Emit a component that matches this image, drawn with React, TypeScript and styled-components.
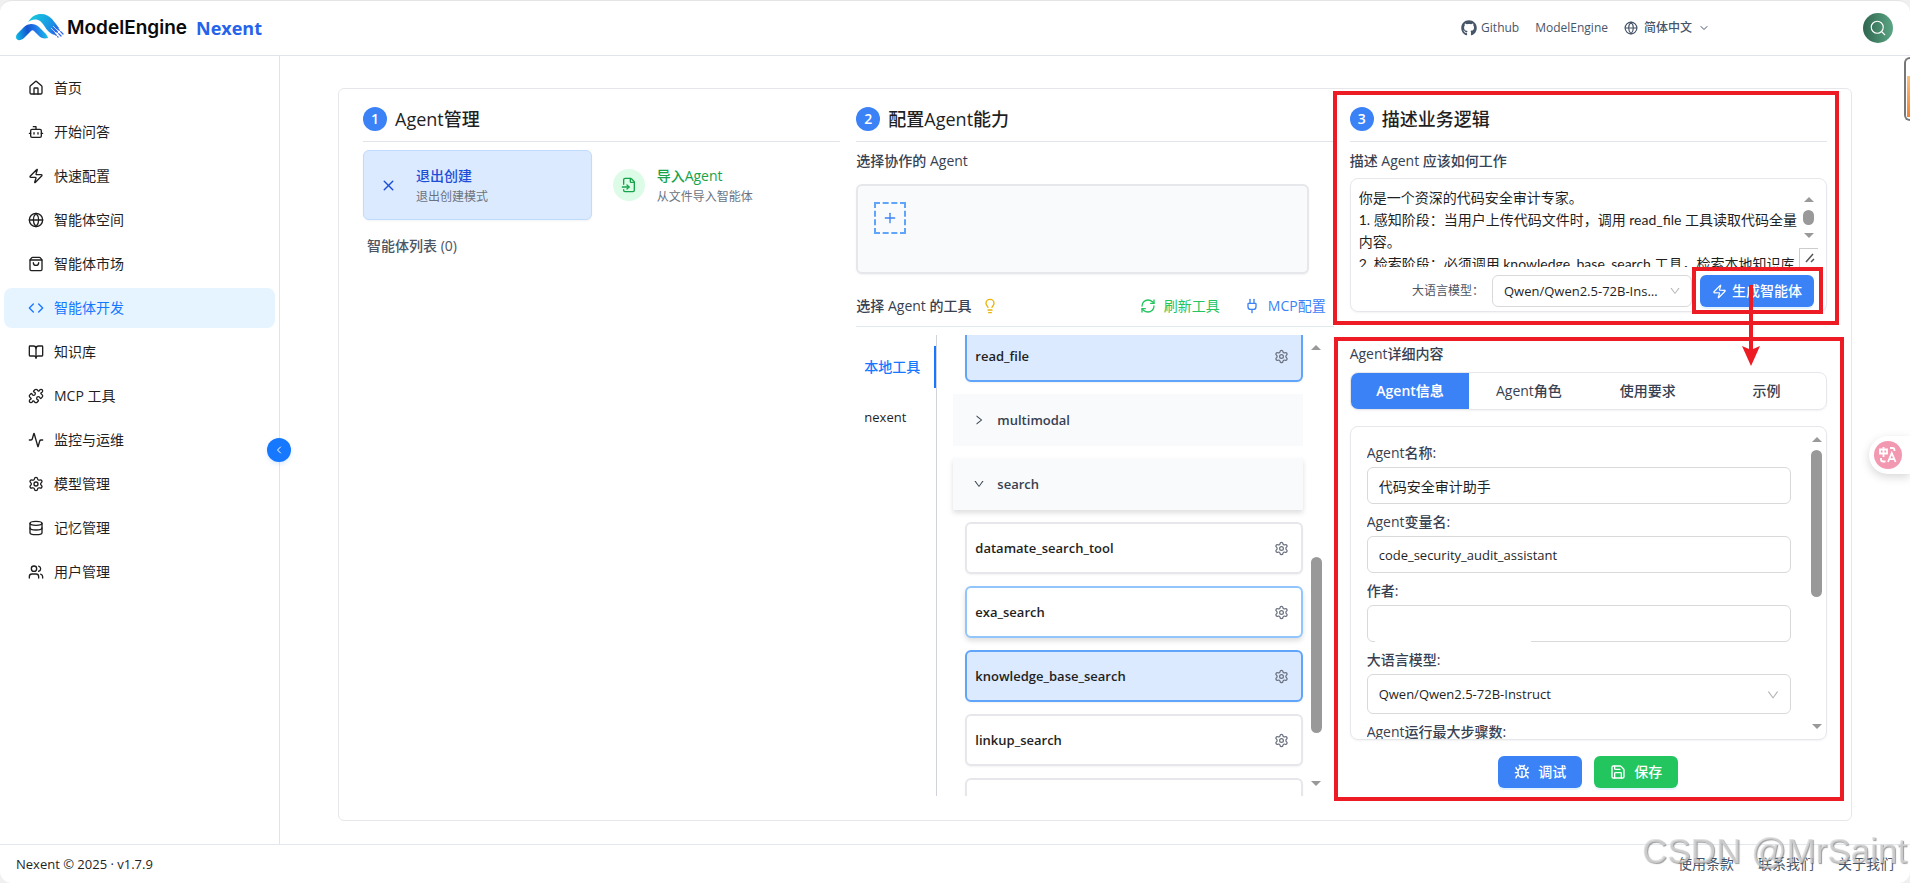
import React, { useEffect, useRef } from "react";
import styled, { createGlobalStyle, css } from "styled-components";
import {
  Activity,
  BookOpen,
  Bot,
  Bug,
  ChevronDown,
  ChevronLeft,
  Code,
  Database,
  FileInput,
  Globe,
  House,
  Lightbulb,
  Plug,
  Plus,
  Puzzle,
  RefreshCw,
  Save,
  Search,
  Settings,
  ShoppingBag,
  Users,
  X,
  Zap,
  type LucideIcon,
} from "lucide-react";
import { AiOutlineDown, AiOutlineRight } from "react-icons/ai";
import { FaGithub } from "react-icons/fa";

const GlobalStyle = createGlobalStyle`
  *, *::before, *::after { box-sizing: border-box; }
  body {
    margin: 0;
    background: #f0f0f0;
    color: #1f1f1f;
    font-family: "Open Sans", "Noto Sans CJK SC", sans-serif;
    font-size: 14px;
    line-height: 22px;
  }
  button, input, select, textarea { font: inherit; color: inherit; }
  button { border: 0; background: none; padding: 0; cursor: pointer; }
  a { color: inherit; text-decoration: none; }
  h1, h2, h3, p { margin: 0; font: inherit; }
`;

/* ---------- page frame ---------- */

const Page = styled.div`
  display: flex;
  flex-direction: column;
  height: 100vh;
  min-height: 720px;
  background: #fff;
  border-top: 1px solid #e4e4e7;
  border-radius: 12px;
  overflow: hidden;
`;

const Header = styled.header`
  display: flex;
  align-items: center;
  flex: none;
  height: 55px;
  padding: 0 17px 0 16px;
  border-bottom: 1px solid #e2e4ec;
`;

const Brand = styled.a`
  display: flex;
  align-items: center;
  gap: 3px;
  margin-right: auto;
`;

const BrandName = styled.span`
  font: 600 19px/28px Inter, sans-serif;
  color: #0a0a0a;
`;

const ProductName = styled.span`
  margin-left: 6px;
  font-size: 18px;
  line-height: 28px;
  font-weight: 700;
  color: #2563eb;
`;

const HeaderNav = styled.nav`
  display: flex;
  align-items: center;
  gap: 16px;
  margin-right: 153px;
  font-size: 12px;
  font-weight: 500;
  color: #475569;

  a, button {
    display: flex;
    align-items: center;
    gap: 4px;
  }
  button { gap: 6px; }
`;

const Avatar = styled.button`
  display: grid;
  place-items: center;
  width: 30px;
  height: 30px;
  border-radius: 50%;
  color: #fff;
  background: linear-gradient(90deg, #2f6650, #5ba583);
`;

const Body = styled.div`
  display: flex;
  flex: 1;
  min-height: 0;
`;

const Sidebar = styled.aside`
  position: relative;
  flex: none;
  width: 280px;
  padding: 12px 4px;
  border-right: 1px solid #e2e4ec;
`;

const Menu = styled.nav`
  display: flex;
  flex-direction: column;
  gap: 4px;
`;

const MenuItem = styled.a<{ $active?: boolean }>`
  display: flex;
  align-items: center;
  gap: 10px;
  height: 40px;
  padding-left: 24px;
  border-radius: 8px;
  color: ${(p) => (p.$active ? "#1677ff" : "#1f1f1f")};
  background: ${(p) => (p.$active ? "#e6f4ff" : "transparent")};
`;

const CollapseToggle = styled.button`
  position: absolute;
  top: calc(50% - 12px);
  right: -12px;
  display: grid;
  place-items: center;
  width: 24px;
  height: 24px;
  border-radius: 50%;
  color: #fff;
  background: #1677ff;
  box-shadow: 0 2px 4px rgba(22, 119, 255, 0.15);
`;

const Main = styled.main`
  flex: 1;
  min-width: 0;
  padding: 32px 58px 23px;
`;

const Board = styled.div`
  display: grid;
  grid-template-columns: repeat(3, minmax(0, 1fr));
  gap: 16px;
  height: 100%;
  padding: 16px 24px 24px;
  border: 1px solid #e5e7eb;
  border-radius: 6px;
`;

const Footer = styled.footer`
  display: flex;
  align-items: center;
  justify-content: space-between;
  flex: none;
  height: 39px;
  padding: 0 16px;
  border-top: 1px solid #e2e8f0;
`;

const Copyright = styled.span`
  font-size: 13px;
`;

const FooterLinks = styled.nav`
  display: flex;
  gap: 24px;
  color: #475569;
`;

/* ---------- shared column parts ---------- */

const Column = styled.section`
  display: flex;
  flex-direction: column;
  min-height: 0;
`;

const StepHeading = styled.header`
  display: flex;
  align-items: center;
  gap: 8px;
  flex: none;
  padding-bottom: 8px;
  border-bottom: 1px solid #e2e4ec;
`;

const StepNumber = styled.span`
  display: grid;
  place-items: center;
  width: 24px;
  height: 24px;
  border-radius: 50%;
  font-size: 14px;
  font-weight: 600;
  color: #fff;
  background: #3b82f6;
`;

const StepTitle = styled.h2`
  font-size: 18px;
  line-height: 28px;
  font-weight: 500;
`;

const SubTitle = styled.h3`
  flex: none;
  margin-top: 8px;
  font-weight: 500;
  color: #374151;
`;

const ScrollTrack = styled.div<{ $pad: number }>`
  display: flex;
  flex-direction: column;
  align-items: center;
  flex: none;
  width: 11px;
  padding: ${(p) => p.$pad}px 0;
`;

const ScrollArrow = styled.span<{ $down?: boolean }>`
  width: 0;
  height: 0;
  border: 5px solid transparent;
  ${(p) =>
    p.$down
      ? css`border-bottom: 0; border-top-color: #999;`
      : css`border-top: 0; border-bottom-color: #999;`}
`;

const ScrollRail = styled.div<{ $before: number; $after: number }>`
  display: grid;
  grid-template-rows: ${(p) => p.$before}fr auto ${(p) => p.$after}fr;
  flex: 1;
  width: 11px;
`;

const ScrollThumb = styled.span<{ $size: number }>`
  grid-row: 2;
  height: ${(p) => p.$size}px;
  border-radius: 6px;
  background: #999;
`;

/* ---------- column 1 ---------- */

const ActionGrid = styled.div`
  display: grid;
  grid-template-columns: 1fr 1fr;
  gap: 12px;
  margin-top: 8px;
  padding-right: 8px;
`;

const ActionCard = styled.button<{ $active?: boolean }>`
  display: flex;
  align-items: center;
  gap: 12px;
  height: 70px;
  padding: 0 8px;
  border: 1px solid ${(p) => (p.$active ? "#bfdbfe" : "transparent")};
  border-radius: 6px;
  background: ${(p) => (p.$active ? "#dbeafe" : "transparent")};
  box-shadow: ${(p) => (p.$active ? "0 1px 2px rgba(0, 0, 0, 0.05)" : "none")};
  text-align: left;
`;

const ActionIcon = styled.span<{ $tint: string; $color: string }>`
  display: grid;
  place-items: center;
  width: 32px;
  height: 32px;
  border-radius: 50%;
  color: ${(p) => p.$color};
  background: ${(p) => p.$tint};
`;

const ActionText = styled.span`
  padding-top: 2px;
`;

const ActionTitle = styled.span<{ $color: string }>`
  display: block;
  font-weight: 500;
  color: ${(p) => p.$color};
`;

const ActionNote = styled.span`
  display: block;
  font-size: 12px;
  line-height: 20px;
  color: #6b7280;
`;

const ListLabel = styled.h3`
  margin-top: 15px;
  padding-left: 4px;
  font-weight: 500;
  color: #4b5563;
`;

/* ---------- column 2 ---------- */

const AgentPicker = styled.div`
  flex: none;
  height: 90px;
  margin: 12px 25px 0 0;
  padding: 16px;
  border: 2px solid #e5e7eb;
  border-radius: 6px;
  background: #f9fafb;
  box-shadow: 0 1px 2px rgba(0, 0, 0, 0.05);
`;

const AddAgent = styled.button`
  display: grid;
  place-items: center;
  width: 32px;
  height: 32px;
  border: 2px dashed #60a5fa;
  color: #3b82f6;
`;

const ToolHeader = styled.header`
  display: flex;
  align-items: center;
  gap: 10px;
  flex: none;
  margin-top: 20px;
  padding: 1px 8px 9px 0;
  border-bottom: 1px solid #e2e8f0;
`;

const ToolHeading = styled.h3`
  font-weight: 500;
  color: #374151;
`;

const ToolActions = styled.div`
  display: flex;
  gap: 24px;
  margin-left: auto;
`;

const TextButton = styled.button<{ $color: string }>`
  display: flex;
  align-items: center;
  gap: 8px;
  color: ${(p) => p.$color};
`;

const ToolArea = styled.div`
  display: flex;
  flex: 1;
  min-height: 0;
  margin-top: 8px;
  padding-right: 12px;
`;

const SourceTabs = styled.div`
  display: flex;
  flex-direction: column;
  gap: 8px;
  flex: none;
  width: 81px;
  padding-top: 11px;
  border-right: 1px solid #d0d3d9;
`;

const SourceTab = styled.button<{ $active?: boolean }>`
  height: 42px;
  padding-left: 8px;
  border-right: 2px solid ${(p) => (p.$active ? "#1677ff" : "transparent")};
  font-size: ${(p) => (p.$active ? 14 : 13)}px;
  font-weight: ${(p) => (p.$active ? 500 : 400)};
  text-align: left;
  color: ${(p) => (p.$active ? "#1677ff" : "#1f1f1f")};
`;

const ToolList = styled.div`
  display: flex;
  flex-direction: column;
  gap: 12px;
  flex: 1;
  min-width: 0;
  margin-right: 4px;
  padding: 0 4px 0 16px;
  overflow: hidden;
`;

const GroupRow = styled.button<{ $open?: boolean }>`
  display: flex;
  align-items: center;
  gap: 12px;
  flex: none;
  height: 52px;
  padding-left: 20px;
  font-size: 13px;
  font-weight: 600;
  color: #374151;
  background: #f9fafb;
  box-shadow: ${(p) => (p.$open ? "0 3px 5px rgba(0, 0, 0, 0.13)" : "none")};
`;

type ToolState = "idle" | "hover" | "selected";
const toolBorder: Record<ToolState, string> = {
  idle: "#e5e7eb",
  hover: "#93c5fd",
  selected: "#60a5fa",
};

const ToolRow = styled.div<{ $state: ToolState }>`
  display: flex;
  align-items: center;
  justify-content: space-between;
  flex: none;
  height: 52px;
  margin-left: 12px;
  padding: 0 12px 0 8px;
  border: 2px solid ${(p) => toolBorder[p.$state]};
  border-radius: 6px;
  background: ${(p) => (p.$state === "selected" ? "#dbeafe" : "#fff")};
  box-shadow: ${(p) =>
    p.$state === "hover" ? "0 3px 5px rgba(0, 0, 0, 0.13)" : "0 1px 2px rgba(0, 0, 0, 0.05)"};
  font-size: 13px;
  font-weight: 600;

  button {
    display: grid;
    color: #6b7280;
  }
`;

/* ---------- column 3 ---------- */

const LogicSection = styled.div`
  position: relative;
  flex: none;
`;

const PromptLabel = styled.label`
  display: block;
  padding-top: 8px;
  font-weight: 500;
  color: #374151;
`;

const PromptBox = styled.div`
  margin-top: 6px;
  padding: 8px 8px 4px;
  border: 1px solid #e5e7eb;
  border-radius: 8px;
  box-shadow: 0 1px 2px rgba(0, 0, 0, 0.05);
`;

const PromptField = styled.div`
  display: flex;
  height: 80px;
`;

const PromptText = styled.textarea`
  flex: 1;
  min-width: 0;
  padding: 0;
  border: 0;
  outline: 0;
  resize: none;
  overflow: hidden;
  white-space: pre;
  background: none;
  font-family: Lato, "Noto Sans CJK SC", sans-serif;
`;

const PromptScroll = styled.div`
  display: flex;
  flex-direction: column;
  align-items: center;
  width: 19px;

  ${ScrollTrack} { flex: 1; }
`;

const ResizeCorner = styled.span`
  display: grid;
  place-items: center;
  width: 19px;
  height: 19px;
  border: solid #ccc;
  border-width: 1px 0 0 1px;
  color: #555;
  background: #fff;
`;

const PromptActions = styled.div`
  display: flex;
  align-items: center;
  justify-content: flex-end;
  gap: 8px;
  margin: 8px 4px 0 0;
`;

const ModelLabel = styled.label`
  font-size: 12px;
  color: #4b5563;
`;

const SelectBox = styled.div<{ $width?: string; $tall?: boolean }>`
  position: relative;
  width: ${(p) => p.$width ?? "100%"};

  select {
    display: block;
    width: 100%;
    height: ${(p) => (p.$tall ? 40 : 32)}px;
    padding: 0 30px 0 11px;
    border: 1px solid #d9d9d9;
    border-radius: 6px;
    appearance: none;
    background: #fff;
    font-size: 13px;
    text-overflow: ellipsis;
  }
  svg {
    position: absolute;
    right: 11px;
    top: calc(50% - 6px);
    color: #b4b4b4;
    pointer-events: none;
  }
`;

const SolidButton = styled.button<{ $color: string; $gap: number; $pad: number }>`
  display: flex;
  align-items: center;
  gap: ${(p) => p.$gap}px;
  height: 32px;
  padding: 0 ${(p) => p.$pad}px;
  border-radius: 6px;
  font-weight: 500;
  color: #fff;
  background: ${(p) => p.$color};
  box-shadow: 0 2px 0 rgba(5, 145, 255, 0.1);
`;

const GenerateWrap = styled.div`
  position: relative;
`;

const DetailSection = styled.div`
  position: relative;
  display: flex;
  flex-direction: column;
  flex: 1;
  min-height: 0;
  margin-top: 32px;
  padding-bottom: 8px;
`;

const DetailTitle = styled.h3`
  line-height: 20px;
  font-weight: 500;
  color: #374151;
`;

const DetailTabs = styled.div`
  display: grid;
  grid-template-columns: repeat(4, 1fr);
  flex: none;
  height: 38px;
  margin: 8px 0 16px;
  border: 1px solid #e5e7eb;
  border-radius: 8px;
  overflow: hidden;
  box-shadow: 0 1px 2px rgba(0, 0, 0, 0.05);
`;

const DetailTab = styled.button<{ $active?: boolean }>`
  font-weight: ${(p) => (p.$active ? 600 : 500)};
  color: ${(p) => (p.$active ? "#fff" : "#374151")};
  background: ${(p) => (p.$active ? "#3b82f6" : "transparent")};
`;

const FormPanel = styled.form`
  display: flex;
  justify-content: space-between;
  flex: 1;
  min-height: 0;
  padding: 0 4px 0 16px;
  border: 1px solid #e5e7eb;
  border-radius: 8px;
  overflow: hidden;
  box-shadow: 0 1px 2px rgba(0, 0, 0, 0.05);
`;

const Fields = styled.div`
  display: flex;
  flex-direction: column;
  gap: 8px;
  flex: 1;
  margin-right: 20px;
  padding-top: 16px;
  overflow: hidden;
`;

const Field = styled.div`
  position: relative;
  flex: none;

  label {
    display: block;
    margin-bottom: 4px;
    line-height: 20px;
    font-weight: 500;
    color: #374151;
  }
`;

const TextInput = styled.input<{ $latin?: boolean }>`
  display: block;
  width: 100%;
  height: 37px;
  padding: 0 11px;
  border: 1px solid #d9d9d9;
  border-radius: 6px;
  font-size: ${(p) => (p.$latin ? 13 : 14)}px;
`;

const Redaction = styled.span`
  position: absolute;
  left: 8px;
  bottom: 0;
  width: 156px;
  height: 30px;
  background: #fff;
`;

const FormActions = styled.div`
  display: flex;
  justify-content: center;
  gap: 12px;
  flex: none;
  margin-top: 16px;
`;

/* ---------- annotations and floating widgets ---------- */

const Highlight = styled.span<{ $inset: string }>`
  position: absolute;
  inset: ${(p) => p.$inset};
  z-index: 2;
  border: 4px solid #ed1c24;
  pointer-events: none;
`;

const PointerArrow = styled.svg`
  position: absolute;
  left: 41px;
  top: 10px;
  z-index: 3;
  pointer-events: none;
`;

const SideDock = styled.div`
  position: fixed;
  top: 57px;
  right: 0;
  width: 6px;
  height: 64px;
  padding: 17px 0 2px 1px;
  border: 2px solid #777;
  border-right: 0;
  border-radius: 6px 0 0 6px;
  background: #fff;

  &::after {
    content: "";
    display: block;
    height: 100%;
    background: linear-gradient(#ffc07a, #f58233);
  }
`;

const TranslateDock = styled.button`
  position: fixed;
  top: 436px;
  right: 0;
  display: flex;
  align-items: center;
  width: 41px;
  height: 38px;
  padding-left: 5px;
  border-radius: 19px 0 0 19px;
  background: #fff;
  box-shadow: 0 3px 10px rgba(0, 0, 0, 0.16);
`;

const Watermark = styled.span`
  position: fixed;
  right: 3px;
  bottom: 12px;
  font: 35px/40px "Liberation Sans", sans-serif;
  color: rgba(218, 218, 218, 0.75);
  text-shadow: 1px 1px 1px rgba(90, 90, 90, 0.6);
  pointer-events: none;
`;

/* ---------- drawings ---------- */

const Logo = () => (
  <svg width="48" height="28" viewBox="0 0 48 28" fill="none" aria-hidden="true">
    <defs>
      <linearGradient id="arcTop" x1="12" y1="0" x2="46" y2="22" gradientUnits="userSpaceOnUse">
        <stop stopColor="#19d0dc" />
        <stop offset=".5" stopColor="#18a0e4" />
        <stop offset="1" stopColor="#2563e8" />
      </linearGradient>
      <linearGradient id="arcLow" x1="0" y1="26" x2="32" y2="20" gradientUnits="userSpaceOnUse">
        <stop stopColor="#10bfe8" />
        <stop offset=".4" stopColor="#1455cf" />
        <stop offset=".65" stopColor="#2076ea" />
        <stop offset="1" stopColor="#18c4e6" />
      </linearGradient>
    </defs>
    <path
      d="M12 8C16 2 20 0 25 0c5 0 8 2 11 5l4 5 3 4-2 2 1 2-2 0-2 1 1 2C34 20 31 16 29 13c-2-3-4-6-7-7-4-1-7 0-10 2z"
      fill="url(#arcTop)"
    />
    <path
      d="M0 23c0-2 1-3 2-4l6-6c4-4 11-4 15 0l7 7c1 2 2 3 2 4-4 1-7 0-9-2l-5-5c-1-1-2-1-3 0l-7 7c-3 3-8 3-8-1z"
      fill="url(#arcLow)"
    />
    <path
      d="M39 12l8 8M37 14l8 8M36 17l6 6"
      stroke="#2f66e8"
      strokeWidth="1.3"
      strokeLinecap="round"
      strokeDasharray="6 2"
    />
    <path d="M37 12l7 7M35 14l6 6" stroke="#fff" strokeWidth=".7" />
  </svg>
);

const TranslateIcon = () => (
  <svg width="28" height="28" viewBox="0 0 28 28" fill="none" stroke="#fff" strokeWidth="1.8" aria-hidden="true">
    <circle cx="14" cy="14" r="14" fill="#f398b1" stroke="none" />
    <path d="M6 8.500h7v4H6zM9.500 6v10" />
    <path d="M14 21l3.800-9 3.800 9M15.200 18.200h5.200" />
    <path d="M16 7h2.500q2 0 2 2v1M7 17v1.500q0 2 2 2h2.500" />
  </svg>
);

/* ---------- data ---------- */

const menu: { label: string; icon: LucideIcon; active?: boolean }[] = [
  { label: "首页", icon: House },
  { label: "开始问答", icon: Bot },
  { label: "快速配置", icon: Zap },
  { label: "智能体空间", icon: Globe },
  { label: "智能体市场", icon: ShoppingBag },
  { label: "智能体开发", icon: Code, active: true },
  { label: "知识库", icon: BookOpen },
  { label: "MCP 工具", icon: Puzzle },
  { label: "监控与运维", icon: Activity },
  { label: "模型管理", icon: Settings },
  { label: "记忆管理", icon: Database },
  { label: "用户管理", icon: Users },
];

const searchTools: { name: string; state: ToolState }[] = [
  { name: "datamate_search_tool", state: "idle" },
  { name: "exa_search", state: "hover" },
  { name: "knowledge_base_search", state: "selected" },
  { name: "linkup_search", state: "idle" },
];

const prompt = `你是一个资深的代码安全审计专家。
1. 感知阶段：当用户上传代码文件时，调用 read_file 工具读取代码全量
内容。
2. 检索阶段：必须调用 knowledge_base_search 工具，检索本地知识库`;

const Step = ({ n, title }: { n: number; title: string }) => (
  <StepHeading>
    <StepNumber>{n}</StepNumber>
    <StepTitle>{title}</StepTitle>
  </StepHeading>
);

const Tool = ({ name, state }: { name: string; state: ToolState }) => (
  <ToolRow $state={state}>
    {name}
    <button type="button" aria-label={`${name} 设置`}>
      <Settings size={15} />
    </button>
  </ToolRow>
);

const Scrollbar = ({ pad, before, after, size }: { pad: number; before: number; after: number; size: number }) => (
  <ScrollTrack $pad={pad} aria-hidden="true">
    <ScrollArrow />
    <ScrollRail $before={before} $after={after}>
      <ScrollThumb $size={size} />
    </ScrollRail>
    <ScrollArrow $down />
  </ScrollTrack>
);

export default function App() {
  const tools = useRef<HTMLDivElement>(null);

  // The list opens slightly scrolled, with its first row cut by the top edge.
  useEffect(() => {
    if (tools.current) tools.current.scrollTop = 5;
  }, []);

  return (
    <>
      <GlobalStyle />
      <Page>
        <Header>
          <Brand href="#">
            <Logo />
            <BrandName>ModelEngine</BrandName>
            <ProductName>Nexent</ProductName>
          </Brand>
          <HeaderNav>
            <a href="#github">
              <FaGithub size={16} />
              Github
            </a>
            <a href="#modelengine">ModelEngine</a>
            <button type="button">
              <Globe size={14} />
              简体中文
              <ChevronDown size={12} />
            </button>
          </HeaderNav>
          <Avatar type="button" aria-label="搜索">
            <Search size={18} strokeWidth={1.5} />
          </Avatar>
        </Header>

        <Body>
          <Sidebar>
            <Menu>
              {menu.map(({ label, icon: Icon, active }) => (
                <MenuItem key={label} href="#" $active={active}>
                  <Icon size={16} />
                  {label}
                </MenuItem>
              ))}
            </Menu>
            <CollapseToggle type="button" aria-label="收起菜单">
              <ChevronLeft size={12} />
            </CollapseToggle>
          </Sidebar>

          <Main>
            <Board>
              <Column>
                <Step n={1} title="Agent管理" />
                <ActionGrid>
                  <ActionCard type="button" $active>
                    <ActionIcon $tint="#dbeafe" $color="#1d4ed8">
                      <X size={17} />
                    </ActionIcon>
                    <ActionText>
                      <ActionTitle $color="#1d4ed8">退出创建</ActionTitle>
                      <ActionNote>退出创建模式</ActionNote>
                    </ActionText>
                  </ActionCard>
                  <ActionCard type="button">
                    <ActionIcon $tint="#dcfce7" $color="#16a34a">
                      <FileInput size={16} />
                    </ActionIcon>
                    <ActionText>
                      <ActionTitle $color="#16a34a">导入Agent</ActionTitle>
                      <ActionNote>从文件导入智能体</ActionNote>
                    </ActionText>
                  </ActionCard>
                </ActionGrid>
                <ListLabel>智能体列表 (0)</ListLabel>
              </Column>

              <Column>
                <Step n={2} title="配置Agent能力" />
                <SubTitle>选择协作的 Agent</SubTitle>
                <AgentPicker>
                  <AddAgent type="button" aria-label="添加 Agent">
                    <Plus size={16} />
                  </AddAgent>
                </AgentPicker>
                <ToolHeader>
                  <ToolHeading>选择 Agent 的工具</ToolHeading>
                  <Lightbulb size={16} color="#eab308" />
                  <ToolActions>
                    <TextButton type="button" $color="#22c55e">
                      <RefreshCw size={16} />
                      刷新工具
                    </TextButton>
                    <TextButton type="button" $color="#3b82f6">
                      <Plug size={16} />
                      MCP配置
                    </TextButton>
                  </ToolActions>
                </ToolHeader>
                <ToolArea>
                  <SourceTabs>
                    <SourceTab type="button" $active>
                      本地工具
                    </SourceTab>
                    <SourceTab type="button">nexent</SourceTab>
                  </SourceTabs>
                  <ToolList ref={tools}>
                    <Tool name="read_file" state="selected" />
                    <GroupRow type="button">
                      <AiOutlineRight size={12} />
                      multimodal
                    </GroupRow>
                    <GroupRow type="button" $open>
                      <AiOutlineDown size={12} />
                      search
                    </GroupRow>
                    {searchTools.map((t) => (
                      <Tool key={t.name} {...t} />
                    ))}
                    <ToolRow $state="idle" aria-hidden="true" />
                  </ToolList>
                  <Scrollbar pad={10} before={206} after={48} size={176} />
                </ToolArea>
              </Column>

              <Column>
                <LogicSection>
                  <Step n={3} title="描述业务逻辑" />
                  <PromptLabel htmlFor="prompt">描述 Agent 应该如何工作</PromptLabel>
                  <PromptBox>
                    <PromptField>
                      <PromptText id="prompt" spellCheck={false} defaultValue={prompt} />
                      <PromptScroll>
                        <Scrollbar pad={10} before={1} after={1} size={15} />
                        <ResizeCorner>
                          <svg width="12" height="12" viewBox="0 0 12 12" stroke="currentColor" strokeWidth="1.5">
                            <path d="M3 10L10 2M8 10l3-3" />
                          </svg>
                        </ResizeCorner>
                      </PromptScroll>
                    </PromptField>
                    <PromptActions>
                      <ModelLabel htmlFor="model">大语言模型：</ModelLabel>
                      <SelectBox $width="200px">
                        <select id="model">
                          <option>Qwen/Qwen2.5-72B-Instruct</option>
                        </select>
                        <AiOutlineDown size={12} />
                      </SelectBox>
                      <GenerateWrap>
                        <SolidButton type="button" $color="#3b82f6" $gap={5} $pad={12}>
                          <Zap size={15} />
                          生成智能体
                        </SolidButton>
                        <Highlight $inset="-8px -9px -7px -8px" />
                        <PointerArrow width="20" height="82" viewBox="0 0 20 82">
                          <path d="M8 0h4v64l7-3-9 20L1 61l7 3z" fill="#ed1c24" />
                        </PointerArrow>
                      </GenerateWrap>
                    </PromptActions>
                  </PromptBox>
                  <Highlight $inset="-14px -12px -13px -17px" />
                </LogicSection>

                <DetailSection>
                  <DetailTitle>Agent详细内容</DetailTitle>
                  <DetailTabs>
                    <DetailTab type="button" $active>
                      Agent信息
                    </DetailTab>
                    <DetailTab type="button">Agent角色</DetailTab>
                    <DetailTab type="button">使用要求</DetailTab>
                    <DetailTab type="button">示例</DetailTab>
                  </DetailTabs>
                  <FormPanel>
                    <Fields>
                      <Field>
                        <label htmlFor="name">Agent名称:</label>
                        <TextInput id="name" defaultValue="代码安全审计助手" />
                      </Field>
                      <Field>
                        <label htmlFor="variable">Agent变量名:</label>
                        <TextInput id="variable" $latin defaultValue="code_security_audit_assistant" />
                      </Field>
                      <Field>
                        <label htmlFor="author">作者:</label>
                        <TextInput id="author" />
                        <Redaction />
                      </Field>
                      <Field>
                        <label htmlFor="llm">大语言模型:</label>
                        <SelectBox $tall>
                          <select id="llm">
                            <option>Qwen/Qwen2.5-72B-Instruct</option>
                          </select>
                          <AiOutlineDown size={14} />
                        </SelectBox>
                      </Field>
                      <Field>
                        <label htmlFor="steps">Agent运行最大步骤数:</label>
                        <TextInput id="steps" $latin />
                      </Field>
                    </Fields>
                    <Scrollbar pad={10} before={8} after={126} size={147} />
                  </FormPanel>
                  <FormActions>
                    <SolidButton type="button" $color="#3b82f6" $gap={8} $pad={16}>
                      <Bug size={16} />
                      调试
                    </SolidButton>
                    <SolidButton type="button" $color="#22c55e" $gap={8} $pad={16}>
                      <Save size={16} />
                      保存
                    </SolidButton>
                  </FormActions>
                  <Highlight $inset="-7px -17px -5px -16px" />
                </DetailSection>
              </Column>
            </Board>
          </Main>
        </Body>

        <Footer>
          <Copyright>Nexent © 2025 · v1.7.9</Copyright>
          <FooterLinks>
            <a href="#terms">使用条款</a>
            <a href="#contact">联系我们</a>
            <a href="#about">关于我们</a>
          </FooterLinks>
        </Footer>
      </Page>
      <SideDock />
      <TranslateDock type="button" aria-label="翻译">
        <TranslateIcon />
      </TranslateDock>
      <Watermark>CSDN @MrSaint</Watermark>
    </>
  );
}
